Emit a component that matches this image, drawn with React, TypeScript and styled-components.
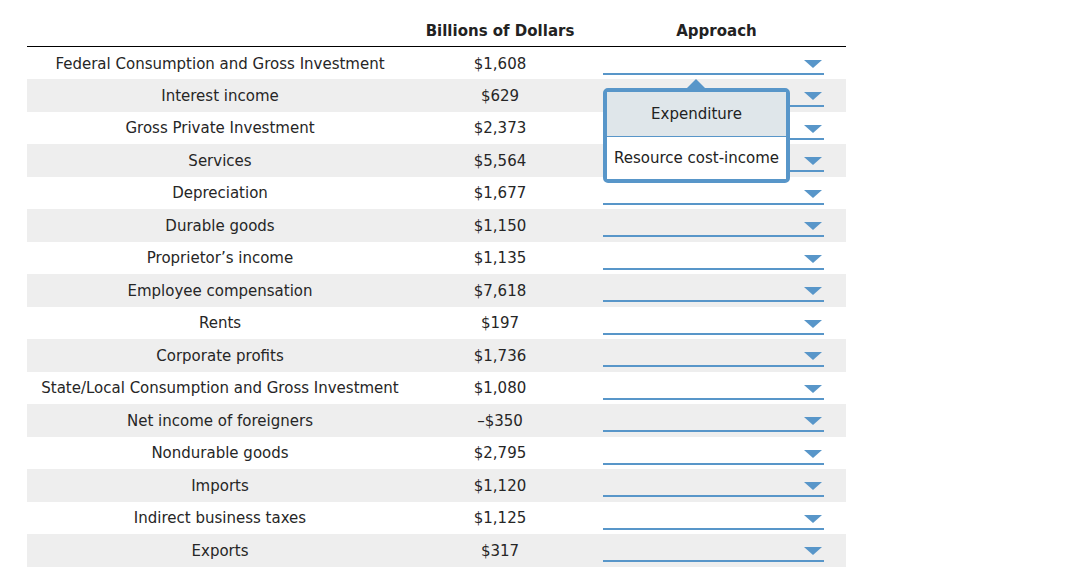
import React from "react";
import styled, {createGlobalStyle} from "styled-components";

interface IRow {
    label: string
    value: string
}

const rows: IRow[] = [
    {label: 'Federal Consumption and Gross Investment', value: '$1,608'},
    {label: 'Interest income', value: '$629'},
    {label: 'Gross Private Investment', value: '$2,373'},
    {label: 'Services', value: '$5,564'},
    {label: 'Depreciation', value: '$1,677'},
    {label: 'Durable goods', value: '$1,150'},
    {label: 'Proprietor\u2019s income', value: '$1,135'},
    {label: 'Employee compensation', value: '$7,618'},
    {label: 'Rents', value: '$197'},
    {label: 'Corporate profits', value: '$1,736'},
    {label: 'State/Local Consumption and Gross Investment', value: '$1,080'},
    {label: 'Net income of foreigners', value: '\u2013$350'},
    {label: 'Nondurable goods', value: '$2,795'},
    {label: 'Imports', value: '$1,120'},
    {label: 'Indirect business taxes', value: '$1,125'},
    {label: 'Exports', value: '$317'},
]

const options = ['Expenditure', 'Resource cost-income']

const App: React.FC = () => {
    return (
        <Page>
            <GlobalStyle/>
            <Table>
                <thead>
                <tr>
                    <HeadCell $width={386}/>
                    <HeadCell $width={174}>Billions of Dollars</HeadCell>
                    <HeadCell $width={259}>Approach</HeadCell>
                </tr>
                </thead>
                <tbody>
                {rows.map((row, i) => (
                    <Row key={row.label} $shaded={i % 2 === 1}>
                        <Cell>{row.label}</Cell>
                        <Cell>{row.value}</Cell>
                        <SelectCell>
                            <Select>
                                <Caret/>
                            </Select>
                            {i === 0 && (
                                <Menu>
                                    {options.map((opt, j) => (
                                        <MenuItem key={opt} $active={j === 0}>{opt}</MenuItem>
                                    ))}
                                </Menu>
                            )}
                        </SelectCell>
                    </Row>
                ))}
                </tbody>
            </Table>
        </Page>
    )
}

export default App

const GlobalStyle = createGlobalStyle`
  body {
    margin: 0;
    background: #fff;
    font-family: Verdana, "DejaVu Sans", sans-serif;
    color: #262626;
  }
`
const Page = styled.div`
  width: 1087px;
  height: 580px;
  padding: 16px 0 0 27px;
  box-sizing: border-box;
  overflow: hidden;
`
const Table = styled.table`
  border-collapse: collapse;
  table-layout: fixed;
  width: 819px;
  font-size: 15px;
`
const HeadCell = styled.th<{ $width: number }>`
  width: ${p => p.$width}px;
  height: 30px;
  padding: 0;
  font-weight: 700;
  text-align: center;
  vertical-align: middle;
  border-bottom: 1px solid #000;
  color: #222;
`
const Row = styled.tr<{ $shaded: boolean }>`
  height: 32.5px;
  background: ${p => p.$shaded ? '#eeeeee' : '#fff'};
`
const Cell = styled.td`
  padding: 1px 0 0;
  text-align: center;
  vertical-align: middle;
  white-space: nowrap;
`
const SelectCell = styled.td`
  position: relative;
  padding: 0 22px 0 16px;
  vertical-align: top;
`
const Select = styled.div`
  border-bottom: 2px solid #5896c9;
  display: flex;
  justify-content: flex-end;
  align-items: flex-start;
  padding: 13px 2px 0 0;
  box-sizing: content-box;
  height: 13px;
`
const Caret = styled.span`
  width: 0;
  height: 0;
  border-left: 9px solid transparent;
  border-right: 9px solid transparent;
  border-top: 8px solid #5896c9;
`
const Menu = styled.div`
  position: absolute;
  z-index: 2;
  top: calc(100% + 9px);
  left: 16px;
  width: 187px;
  box-sizing: border-box;
  border: 4px solid #5896c9;
  border-radius: 5px;
  background: #fff;

  &::before {
    content: '';
    position: absolute;
    top: -13px;
    left: 80px;
    border-left: 9px solid transparent;
    border-right: 9px solid transparent;
    border-bottom: 9px solid #5896c9;
  }
`
const MenuItem = styled.div<{ $active: boolean }>`
  height: ${p => p.$active ? 44 : 42}px;
  display: flex;
  align-items: center;
  justify-content: center;
  background: ${p => p.$active ? '#dfe6ea' : '#fff'};
  border-bottom: ${p => p.$active ? '1px solid #5896c9' : 'none'};
  white-space: nowrap;
  color: #222;
`
